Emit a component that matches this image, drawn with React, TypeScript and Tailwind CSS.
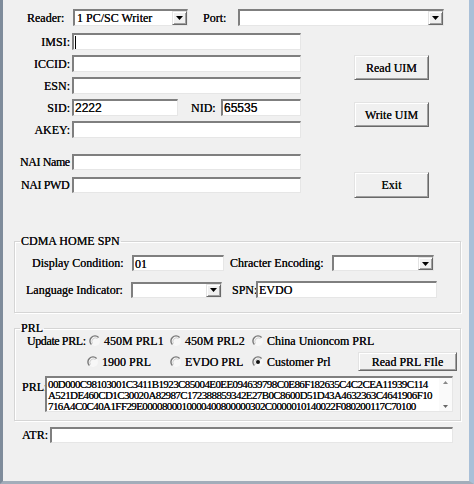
import { clsx } from "clsx";

const sunken =
  "bg-white border-t-2 border-l-2 border-r border-b border-t-[#7f7f7f] border-l-[#7f7f7f] border-r-[#e6e6e6] border-b-[#e6e6e6]";
const raised =
  "border border-t-[#e3e3e3] border-l-[#e3e3e3] border-r-[#696969] border-b-[#696969] shadow-[inset_1px_1px_0_#ffffff,inset_-1px_-1px_0_#a0a0a0]";

function Input({ className, value, sans }: { className: string; value?: string; sans?: boolean }) {
  return (
    <div
      className={clsx(
        sunken,
        "flex items-center pl-[1px] overflow-hidden whitespace-nowrap",
        sans && "font-['Liberation_Sans',sans-serif]",
        className
      )}
    >
      {value}
    </div>
  );
}

function Combo({ className, value }: { className: string; value?: string }) {
  return (
    <div className={clsx(sunken, "flex items-stretch", className)}>
      <div className="flex-1 flex items-center pl-[2px] overflow-hidden whitespace-nowrap">{value}</div>
      <div className={clsx(raised, "w-[15px] bg-[#f0f0f0] flex items-center justify-center")}>
        <svg width="7" height="4" viewBox="0 0 7 4">
          <path d="M0 0h7L3.5 4z" fill="#000" />
        </svg>
      </div>
    </div>
  );
}

function Button({ className, label }: { className: string; label: string }) {
  return (
    <div className={clsx(raised, "bg-[#f0f0f0] flex items-center justify-center whitespace-nowrap", className)}>
      {label}
    </div>
  );
}

function Radio({ checked }: { checked?: boolean }) {
  return (
    <svg width="12" height="12" viewBox="0 0 12 12" className="shrink-0">
      <circle cx="6" cy="6" r="5" fill="#f7f7f7" />
      <path d="M9.6 2.4A5 5 0 0 0 2.4 9.6" stroke="#777" strokeWidth="1.4" fill="none" />
      <path d="M8.5 3.5A3.6 3.6 0 0 0 3.5 8.5" stroke="#cfcfcf" strokeWidth="1" fill="none" />
      {checked && <circle cx="6" cy="6" r="2" fill="#111" />}
    </svg>
  );
}

function RadioItem({ className, label, checked }: { className: string; label: string; checked?: boolean }) {
  return (
    <div className={clsx("flex items-center", className)}>
      <Radio checked={checked} />
      <span className="ml-[3px] whitespace-nowrap">{label}</span>
    </div>
  );
}

const prlLines = [
  "00D000C98103001C3411B1923C85004E0EE094639798C0E86F182635C4C2CEA11939C114",
  "A521DE460CD1C30020A82987C172388859342E27B0C8600D51D43A4632363C4641906F10",
  "716A4C0C40A1FF29E0000800010000400800000302C0000010140022F080200117C70100",
];

export default function App() {
  return (
    <div className="w-[474px] h-[484px] box-border overflow-hidden pt-[9px] bg-[#f0f0f0] border-l-[3px] border-r-[5px] border-b-[3px] border-l-[#7f8c9b] border-r-[#a9c0d8] border-b-[#a2adba] font-['Liberation_Serif',serif] text-[12px] leading-none text-[#111] [text-shadow:0_0_0.3px_#000]">
      {/* reader / port */}
      <div className="flex items-center h-[17px]">
        <span className="ml-[24px] w-[46px]">Reader:</span>
        <Combo className="w-[115px] h-[17px]" value="1 PC/SC Writer" />
        <span className="ml-[15px] w-[35px]">Port:</span>
        <Combo className="w-[206px] h-[17px]" />
      </div>

      <div className="flex mt-[7px]">
        <div className="w-[298px] flex flex-col">
          <div className="flex flex-col gap-[5px]">
            <div className="flex items-center h-[17px]">
              <span className="w-[69px] pr-[2px] text-right">IMSI:</span>
              <div className={clsx(sunken, "w-[229px] h-[17px] flex items-center pl-[1px]")}>
                <span className="w-[1px] h-[13px] bg-black" />
              </div>
            </div>
            <div className="flex items-center h-[17px]">
              <span className="w-[69px] pr-[2px] text-right">ICCID:</span>
              <Input className="w-[229px] h-[17px]" />
            </div>
            <div className="flex items-center h-[17px]">
              <span className="w-[69px] pr-[2px] text-right">ESN:</span>
              <Input className="w-[229px] h-[17px]" />
            </div>
            <div className="flex items-center h-[17px]">
              <span className="w-[69px] pr-[2px] text-right">SID:</span>
              <Input className="w-[106px] h-[17px]" value="2222" sans />
              <span className="ml-[13px] w-[30px]">NID:</span>
              <Input className="w-[80px] h-[17px]" value="65535" sans />
            </div>
            <div className="flex items-center h-[17px]">
              <span className="w-[69px] pr-[2px] text-right">AKEY:</span>
              <Input className="w-[229px] h-[17px]" />
            </div>
          </div>

          <div className="flex flex-col gap-[7px] mt-[16px]">
            <div className="flex items-center h-[16px]">
              <span className="w-[69px] pl-[17px] whitespace-nowrap tracking-[-0.4px]">NAI Name</span>
              <Input className="w-[229px] h-[16px]" />
            </div>
            <div className="flex items-center h-[16px]">
              <span className="w-[69px] pl-[18px] whitespace-nowrap tracking-[-0.4px]">NAI PWD</span>
              <Input className="w-[229px] h-[16px]" />
            </div>
          </div>
        </div>

        <div className="ml-[53px] w-[75px] flex flex-col">
          <Button className="mt-[22px] h-[25px]" label="Read UIM" />
          <Button className="mt-[22px] h-[25px]" label="Write UIM" />
          <Button className="mt-[45px] h-[26px]" label="Exit" />
        </div>
      </div>

      {/* CDMA HOME SPN */}
      <fieldset className="mt-[37px] ml-[11px] w-[447px] h-[78px] box-border border border-[#d5d5d5] shadow-[inset_1px_1px_0_#ffffff,1px_1px_0_#ffffff]">
        <legend className="ml-[5px] px-[1px] leading-[12px]">CDMA HOME SPN</legend>
        <div className="flex items-center h-[18px] mt-[7px] pl-[17px]">
          <span className="w-[100px] whitespace-nowrap">Display Condition:</span>
          <Input className="w-[92px] h-[16px]" value="01" />
          <span className="ml-[6px] w-[102px] whitespace-nowrap">Chracter Encoding:</span>
          <Combo className="w-[102px] h-[16px]" />
        </div>
        <div className="flex items-center h-[19px] mt-[8px] pl-[11px]">
          <span className="w-[105px] whitespace-nowrap">Language Indicator:</span>
          <Combo className="w-[91px] h-[16px]" />
          <span className="ml-[10px] w-[24px]">SPN:</span>
          <Input className="w-[181px] h-[17px]" value="EVDO" />
        </div>
      </fieldset>

      {/* PRL */}
      <fieldset className="mt-[9px] ml-[11px] w-[447px] h-[99px] box-border border border-[#d5d5d5] shadow-[inset_1px_1px_0_#ffffff,1px_1px_0_#ffffff]">
        <legend className="ml-[5px] px-[1px] leading-[12px]">PRL</legend>
        <div className="flex items-center h-[14px] pl-[12px]">
          <span className="w-[62px] whitespace-nowrap tracking-[-0.4px]">Update PRL:</span>
          <RadioItem className="w-[81px]" label="450M PRL1" />
          <RadioItem className="w-[82px]" label="450M PRL2" />
          <RadioItem className="flex-1" label="China Unioncom PRL" />
        </div>
        <div className="flex items-center h-[19px] mt-[4px] pl-[72px]">
          <RadioItem className="w-[83px]" label="1900 PRL" />
          <RadioItem className="w-[82px]" label="EVDO PRL" />
          <RadioItem className="w-[106px]" label="Customer Prl" checked />
          <Button className="w-[99px] h-[19px]" label="Read PRL FIle" />
        </div>
        <div className="flex items-start mt-[5px] pl-[7px]">
          <span className="w-[23px] mt-[5px]">PRL:</span>
          <div className={clsx(sunken, "w-[408px] h-[36px] flex")}>
            <div className="flex-1 overflow-hidden text-[11px] leading-[11px] tracking-[-0.6px] pl-[1px] pt-[1px]">
              {prlLines.map((l) => (
                <div key={l} className="whitespace-pre">
                  {l}
                </div>
              ))}
            </div>
            <div className="w-[13px] flex flex-col items-center justify-between py-[3px] bg-[#fafafa]">
              <svg width="5" height="3" viewBox="0 0 5 3">
                <path d="M0 3h5L2.5 0z" fill="#888" />
              </svg>
              <svg width="5" height="3" viewBox="0 0 5 3">
                <path d="M0 0h5L2.5 3z" fill="#666" />
              </svg>
            </div>
          </div>
        </div>
      </fieldset>

      {/* ATR */}
      <div className="flex items-center h-[16px] mt-[6px]">
        <span className="ml-[19px] w-[28px]">ATR:</span>
        <Input className="w-[403px] h-[16px]" />
      </div>
    </div>
  );
}
